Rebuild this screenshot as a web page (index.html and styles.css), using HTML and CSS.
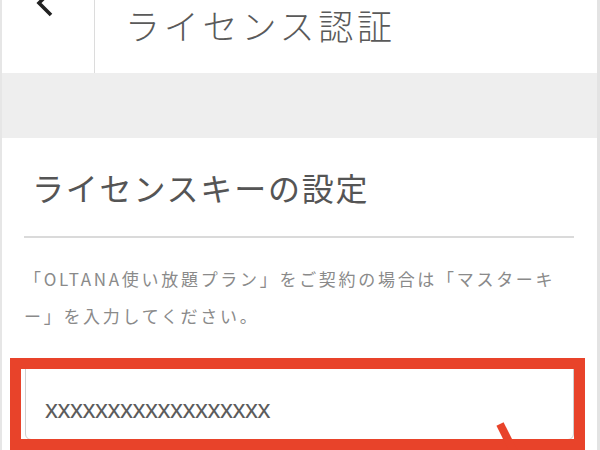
FILE: index.html
```html
<!DOCTYPE html>
<html lang="ja">
<head>
<meta charset="utf-8">
<link rel="stylesheet" href="styles.css">
</head>
<body>
<div class="page">
  <header class="topbar">
    <div class="back">
      <svg class="chevron" width="20" height="30" viewBox="0 0 20 30"><path d="M16 2 L4 14 L16 26" fill="none" stroke="#222" stroke-width="3.6" stroke-linecap="butt"/></svg>
    </div>
    <h1 class="title">ライセンス認証</h1>
  </header>
  <div class="band"></div>
  <section class="card">
    <h2 class="heading">ライセンスキーの設定</h2>
    <hr class="rule">
    <p class="note">「OLTANA使い放題プラン」をご契約の場合は「マスターキー」を入力してください。</p>
    <div class="field">
      <div class="input">xxxxxxxxxxxxxxxxxx</div>
    </div>
  </section>
  <div class="highlight"></div>
  <svg class="arrow" width="40" height="40" viewBox="0 0 40 40"><path d="M4 2 L18 30" stroke="#e8432a" stroke-width="8"/></svg>
</div>
</body>
</html>
```
FILE: styles.css
```css
html, body {
  margin: 0;
  padding: 0;
  background: #fff;
}
.page {
  position: relative;
  width: 600px;
  height: 450px;
  overflow: hidden;
  box-sizing: border-box;
  border-left: 2px solid #e6e6e6;
  border-right: 3px solid #e3e3e3;
  font-family: "Noto Sans CJK JP", "Noto Sans", sans-serif;
}
.topbar {
  display: flex;
  height: 73px;
  background: #fff;
}
.back {
  position: relative;
  width: 92px;
  flex: none;
  border-right: 1.5px solid #dcdcdc;
}
.chevron {
  position: absolute;
  left: 33px;
  top: -11px;
}
.title {
  margin: 0;
  padding: 0 0 0 30px;
  font-size: 35px;
  font-weight: 300;
  letter-spacing: 3.8px;
  color: #5a5a5a;
  line-height: 50px;
}
.band {
  height: 65px;
  background: #eeeeee;
}
.card {
  padding: 0 23px 0 22px;
}
.heading {
  margin: 0;
  padding: 26px 0 0 8px;
  font-size: 32px;
  font-weight: 400;
  letter-spacing: 1.8px;
  line-height: 46px;
  color: #555;
}
.rule {
  margin: 26px 0 0 0;
  border: 0;
  height: 2px;
  background: #dadada;
}
.note {
  margin: 22px 0 0 0;
  font-size: 17px;
  letter-spacing: 2.7px;
  line-height: 37px;
  color: #8a8a8a;
}
.field {
  padding: 26px 0 0 1px;
}
.input {
  height: 80px;
  border: 1.5px solid #cfcfcf;
  border-radius: 6px;
  padding: 33px 0 0 19px;
  box-sizing: border-box;
  font-family: "Liberation Sans", Arial, sans-serif;
  font-size: 26px;
  letter-spacing: -0.5px;
  color: #5c5c5c;
}
.highlight {
  position: absolute;
  left: 8px;
  top: 358px;
  width: 575px;
  height: 92px;
  box-sizing: border-box;
  border: 11px solid #e8432a;
}
.arrow {
  position: absolute;
  left: 494px;
  top: 422px;
}
```
